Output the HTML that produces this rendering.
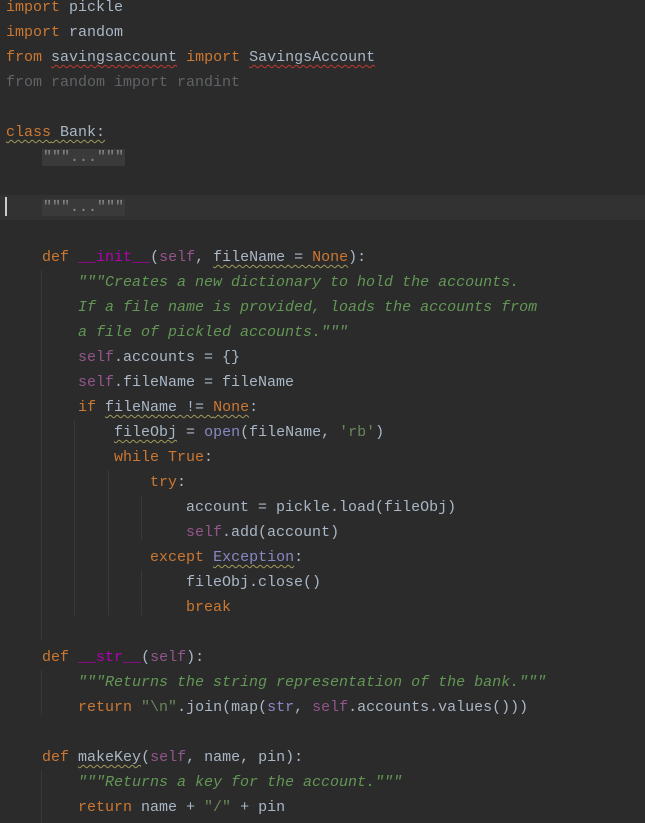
<!DOCTYPE html>
<html><head><meta charset="utf-8"><style>
html,body{margin:0;padding:0;background:#2b2b2b;width:645px;height:823px;overflow:hidden}
.l{position:absolute;left:6px;height:25px;line-height:25px;white-space:pre;font-family:"Liberation Mono",monospace;font-size:15px;color:#a9b7c6}
.k{color:#cc7832}.s{color:#94558d}.d{color:#629755;font-style:italic}.st{color:#6a8759}.m{color:#b200b2}.b{color:#8888c6}.g{color:#606366}
.w{text-decoration:underline wavy #c0392b;text-decoration-thickness:1px;text-underline-offset:3px}
.y{text-decoration:underline wavy #a09a5a;text-decoration-thickness:1px;text-underline-offset:3px}
.f{background:#3a3a3a;color:#8a8a8a;padding:0 1px}
.hl{position:absolute;left:0;width:645px;height:25px;background:#323232}
.gd{position:absolute;width:1px;background:#393939}
.cur{position:absolute;left:5px;width:2px;height:19px;background:#ccc}
</style></head><body>
<div class="hl" style="top:195px"></div>
<div class="cur" style="top:197px"></div>
<div class="gd" style="left:41px;top:270px;height:370px"></div>
<div class="gd" style="left:74px;top:420px;height:195px"></div>
<div class="gd" style="left:108px;top:470px;height:145px"></div>
<div class="gd" style="left:141px;top:495px;height:45px"></div>
<div class="gd" style="left:141px;top:570px;height:45px"></div>
<div class="gd" style="left:41px;top:670px;height:45px"></div>
<div class="gd" style="left:41px;top:770px;height:53px"></div>
<div class="l" style="top:-5px"><span class="k">import</span> pickle</div>
<div class="l" style="top:20px"><span class="k">import</span> random</div>
<div class="l" style="top:45px"><span class="k">from</span> <span class="w">savingsaccount</span> <span class="k">import</span> <span class="w">SavingsAccount</span></div>
<div class="l g" style="top:70px">from random import randint</div>
<div class="l" style="top:120px"><span class="y"><span class="k">class</span> Bank:</span></div>
<div class="l" style="top:145px">    <span class="f">"""..."""</span></div>
<div class="l" style="top:195px">    <span class="f">"""..."""</span></div>
<div class="l" style="top:245px">    <span class="k">def</span> <span class="m">__init__</span>(<span class="s">self</span>, <span class="y">fileName = <span class="k">None</span></span>):</div>
<div class="l d" style="top:270px">        """Creates a new dictionary to hold the accounts.</div>
<div class="l d" style="top:295px">        If a file name is provided, loads the accounts from</div>
<div class="l d" style="top:320px">        a file of pickled accounts."""</div>
<div class="l" style="top:345px">        <span class="s">self</span>.accounts = {}</div>
<div class="l" style="top:370px">        <span class="s">self</span>.fileName = fileName</div>
<div class="l" style="top:395px">        <span class="k">if</span> <span class="y">fileName != <span class="k">None</span></span>:</div>
<div class="l" style="top:420px">            <span class="y">fileObj</span> = <span class="b">open</span>(fileName, <span class="st">'rb'</span>)</div>
<div class="l" style="top:445px">            <span class="k">while True</span>:</div>
<div class="l" style="top:470px">                <span class="k">try</span>:</div>
<div class="l" style="top:495px">                    account = pickle.load(fileObj)</div>
<div class="l" style="top:520px">                    <span class="s">self</span>.add(account)</div>
<div class="l" style="top:545px">                <span class="k">except</span> <span class="b y">Exception</span>:</div>
<div class="l" style="top:570px">                    fileObj.close()</div>
<div class="l" style="top:595px">                    <span class="k">break</span></div>
<div class="l" style="top:645px">    <span class="k">def</span> <span class="m">__str__</span>(<span class="s">self</span>):</div>
<div class="l d" style="top:670px">        """Returns the string representation of the bank."""</div>
<div class="l" style="top:695px">        <span class="k">return</span> <span class="st">"\n"</span>.join(map(<span class="b">str</span>, <span class="s">self</span>.accounts.values()))</div>
<div class="l" style="top:745px">    <span class="k">def</span> <span class="y">makeKey</span>(<span class="s">self</span>, name, pin):</div>
<div class="l d" style="top:770px">        """Returns a key for the account."""</div>
<div class="l" style="top:795px">        <span class="k">return</span> name + <span class="st">"/"</span> + pin</div>
</body></html>
